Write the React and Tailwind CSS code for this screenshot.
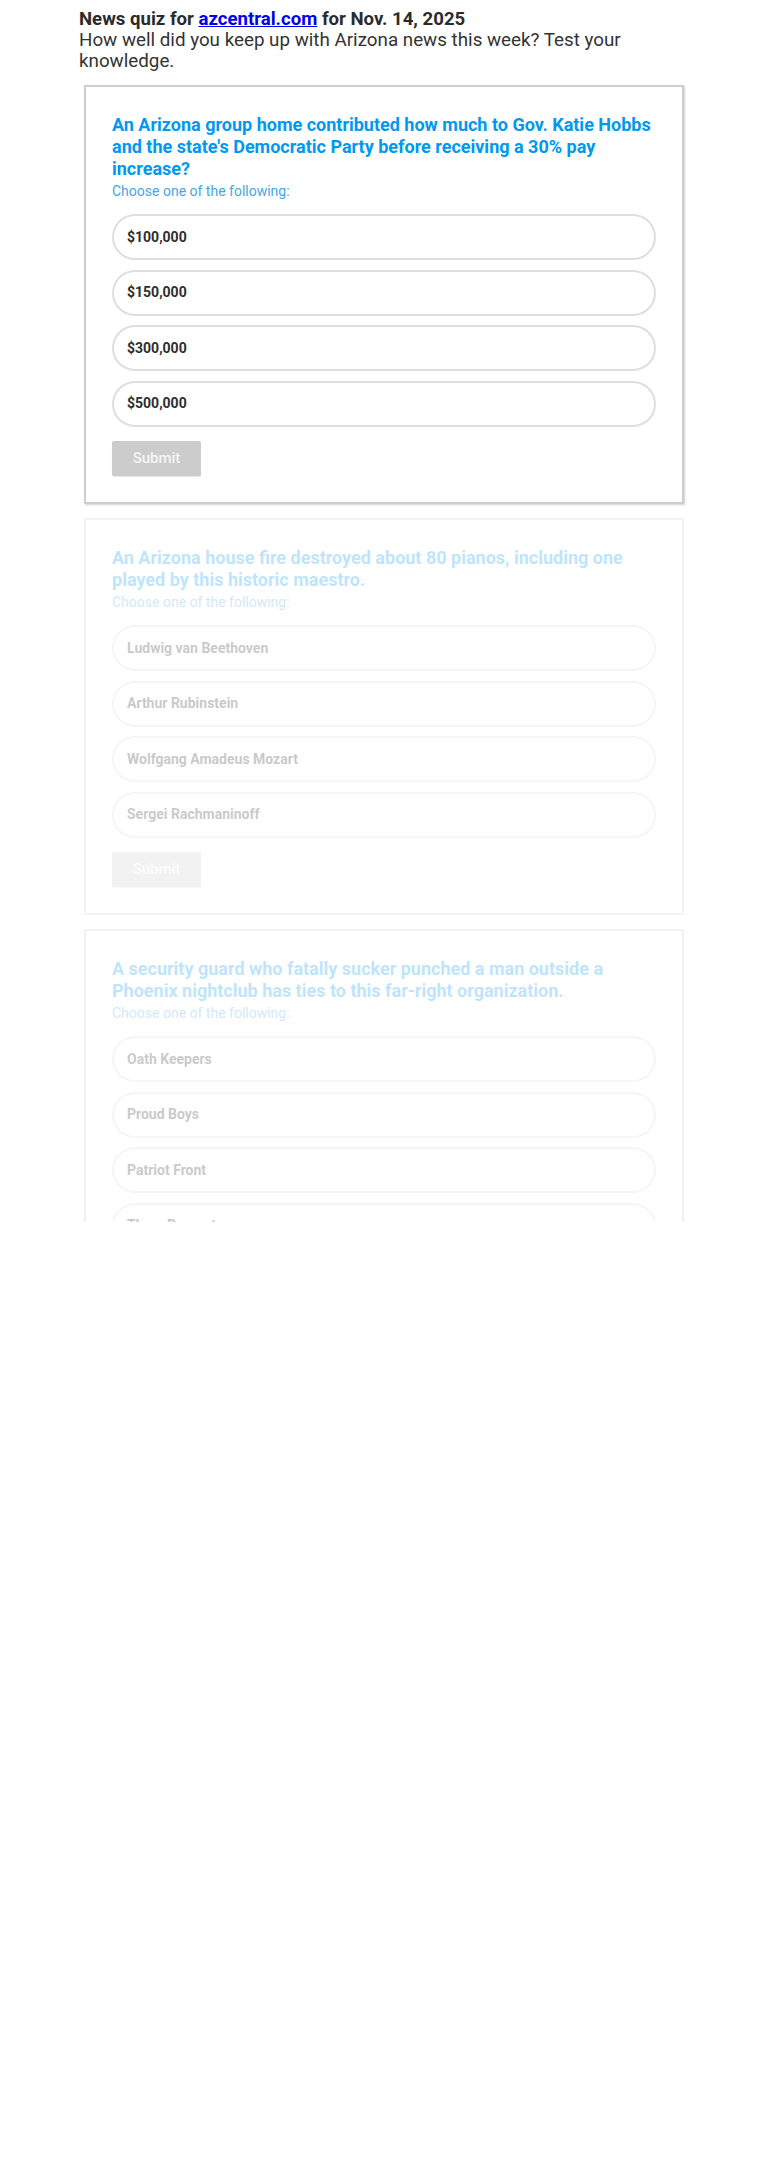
const QUESTIONS = [
  {
    title: "An Arizona group home contributed how much to Gov. Katie Hobbs and the state's Democratic Party before receiving a 30% pay increase?",
    options: ['$100,000', '$150,000', '$300,000', '$500,000'],
  },
  {
    title: 'An Arizona house fire destroyed about 80 pianos, including one played by this historic maestro.',
    options: ['Ludwig van Beethoven', 'Arthur Rubinstein', 'Wolfgang Amadeus Mozart', 'Sergei Rachmaninoff'],
  },
  {
    title: 'A security guard who fatally sucker punched a man outside a Phoenix nightclub has ties to this far-right organization.',
    options: ['Oath Keepers', 'Proud Boys', 'Patriot Front', 'Three Percenters'],
  },
];

function QuestionCard({ q, active }) {
  return (
    <div
      className={
        active
          ? 'mx-[5px] border-2 border-[#cdcdcd] bg-white px-[26px] pt-[27px] pb-[26px] shadow-[1px_1px_2px_rgba(0,0,0,0.18)]'
          : 'mx-[5px] border-2 border-[#cdcdcd] bg-white px-[26px] pt-[27px] pb-[26px] opacity-25'
      }
    >
      <h2 className="text-[18px] font-bold leading-[22px] text-[#0098f0]">{q.title}</h2>
      <p className="text-[14px] leading-[22px] text-[#47a6e4]">Choose one of the following:</p>
      <div className="mt-[12px] flex flex-col gap-[9.5px]">
        {q.options.map((o) => (
          <div
            key={o}
            className="flex h-[46px] items-center rounded-full border-2 border-[#dedede] bg-white pl-[13px] text-[14px] font-bold text-[#2e2e2e]"
          >
            {o}
          </div>
        ))}
      </div>
      <button className="mt-[14.5px] h-[35px] w-[89px] rounded-[2px] bg-[#cccccc] text-[15px] font-medium text-[#f4f4f4] shadow-[0_1px_1px_rgba(0,0,0,0.1)]">
        Submit
      </button>
    </div>
  );
}

export default function App() {
  return (
    <div className="min-h-[2161px] bg-white font-['Roboto',sans-serif]">
      <div className="mx-auto w-[610px] pt-[8px]">
        <h1 className="text-[18.6px] font-bold leading-[22px] text-[#2b2b2b]">
          News quiz for{' '}
          <a href="#" className="text-[#0000ee] underline">
            azcentral.com
          </a>{' '}
          for Nov. 14, 2025
        </h1>
        <p className="text-[18.8px] leading-[21px] text-[#333333]">
          How well did you keep up with Arizona news this week? Test your knowledge.
        </p>
        <div className="mt-[8px] h-[1142px] overflow-hidden pt-[5px]">
          <div className="flex flex-col gap-[14px]">
            {QUESTIONS.map((q, i) => (
              <QuestionCard key={i} q={q} active={i === 0} />
            ))}
          </div>
        </div>
      </div>
    </div>
  );
}
